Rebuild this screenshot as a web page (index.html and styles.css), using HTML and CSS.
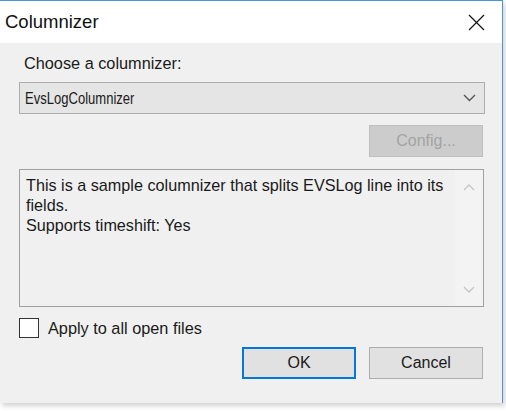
FILE: index.html
```html
<!DOCTYPE html>
<html>
<head>
<meta charset="utf-8">
<link rel="stylesheet" href="styles.css">
</head>
<body>
<div class="window">
  <div class="titlebar">
    <span class="title">Columnizer</span>
    <svg class="close" width="17" height="17" viewBox="0 0 17 17"><path d="M1 1 L16 16 M16 1 L1 16" stroke="#111" stroke-width="1.2" fill="none"/></svg>
  </div>
  <div class="content">
    <div class="label">Choose a columnizer:</div>
    <div class="combo">
      <span class="combo-text">EvsLogColumnizer</span>
      <svg width="13" height="8" viewBox="0 0 13 8"><path d="M1 1 L6.5 6.5 L12 1" stroke="#555" stroke-width="1.4" fill="none"/></svg>
    </div>
    <div class="row-right">
      <div class="btn disabled">Config...</div>
    </div>
    <div class="textbox">
      <div class="text">This is a sample columnizer that splits EVSLog line into its fields.<br>Supports timeshift: Yes</div>
      <div class="scroll">
        <svg width="12" height="7" viewBox="0 0 12 7"><path d="M1 6 L6 1 L11 6" stroke="#c4c4c4" stroke-width="1.3" fill="none"/></svg>
        <svg width="12" height="7" viewBox="0 0 12 7"><path d="M1 1 L6 6 L11 1" stroke="#c4c4c4" stroke-width="1.3" fill="none"/></svg>
      </div>
    </div>
    <label class="check"><span class="box"></span><span>Apply to all open files</span></label>
    <div class="buttons">
      <div class="btn default">OK</div>
      <div class="btn">Cancel</div>
    </div>
  </div>
</div>
</body>
</html>
```
FILE: styles.css
```css
html, body {
  margin: 0;
  padding: 0;
  background: #ffffff;
}
body {
  font-family: "Liberation Sans", Arial, sans-serif;
  color: #1a1a1a;
  width: 506px;
  height: 411px;
  overflow: hidden;
}
.window {
  width: 502px;
  height: 402px;
  border-top: 1px solid #4a96d8;
  border-right: 1px solid #4a96d8;
  display: flex;
  flex-direction: column;
  box-shadow: 2px 3px 5px rgba(0,0,0,0.18);
}
.titlebar {
  height: 42px;
  background: #ffffff;
  display: flex;
  align-items: center;
  justify-content: space-between;
  padding: 0 17px 0 5px;
  flex-shrink: 0;
}
.title {
  font-size: 18.5px;
  color: #111;
}
.close {
  margin-top: 1px;
}
.content {
  flex: 1;
  background: #f0f0f0;
  padding: 10px 17px 0 19px;
  display: flex;
  flex-direction: column;
}
.label {
  font-size: 16.3px;
  line-height: 20px;
  padding-left: 5px;
  margin-bottom: 9px;
}
.combo {
  height: 30px;
  border: 1px solid #adadad;
  background: #e5e5e5;
  display: flex;
  align-items: center;
  justify-content: space-between;
  padding: 0 8px 0 5px;
  font-size: 16.5px;
  margin-bottom: 11px;
}
.combo-text {
  display: inline-block;
  transform: scaleX(0.79);
  transform-origin: left center;
}
.row-right {
  display: flex;
  justify-content: flex-end;
  padding-right: 2px;
  margin-bottom: 12px;
}
.btn {
  width: 112px;
  height: 30px;
  border: 1px solid #adadad;
  background: #e1e1e1;
  display: flex;
  align-items: center;
  justify-content: center;
  font-size: 16px;
  box-sizing: content-box;
}
.btn.disabled {
  background: #cccccc;
  border-color: #bfbfbf;
  color: #a3a3a3;
}
.btn.default {
  width: 110px;
  height: 28px;
  border: 2px solid #0078d7;
}
.textbox {
  height: 136px;
  border: 1px solid #a0a0a0;
  background: #f0f0f0;
  display: flex;
  margin-right: 1px;
  margin-bottom: 11px;
}
.text {
  flex: 1;
  font-size: 16.2px;
  line-height: 20px;
  padding: 5px 4px 0 6px;
}
.scroll {
  width: 28px;
  background: #f3f3f3;
  display: flex;
  flex-direction: column;
  justify-content: space-between;
  align-items: center;
  padding: 14px 0 13px;
}
.check {
  display: flex;
  align-items: center;
  gap: 9px;
  font-size: 16.3px;
  height: 20px;
  margin-bottom: 9px;
}
.box {
  width: 18px;
  height: 18px;
  border: 1px solid #333;
  background: #fff;
}
.buttons {
  display: flex;
  justify-content: flex-end;
  gap: 13px;
  padding-right: 2px;
}
```
